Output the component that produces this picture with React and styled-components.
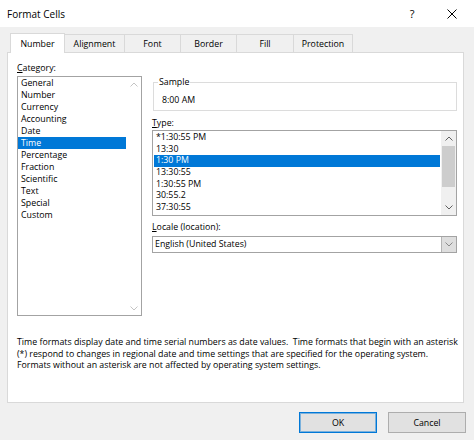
import React from "react";
import styled, { createGlobalStyle } from "styled-components";

const GlobalStyle = createGlobalStyle`
  html, body { margin: 0; padding: 0; background: #f0f0f0; }
  body {
    font-family: "Segoe UI", "Open Sans", "Noto Sans", sans-serif;
    font-size: 8.8px;
    color: #000;
  }
  * { box-sizing: border-box; }
`;

const Window = styled.div`
  width: 474px;
  height: 440px;
  background: #f0f0f0;
  display: flex;
  flex-direction: column;
  overflow: hidden;
`;

const TitleBar = styled.div`
  height: 27px;
  flex-shrink: 0;
  background: #fff;
  display: flex;
  align-items: center;
  padding: 0 2px 0 7px;
`;

const Title = styled.div`
  flex: 1;
  font-size: 10px;
  line-height: 14px;
`;

const TitleButton = styled.div`
  width: 40px;
  height: 27px;
  display: flex;
  align-items: center;
  justify-content: center;
  font-size: 11px;
`;

const Body = styled.div`
  padding: 6px 10px 0 7px;
  display: flex;
  flex-direction: column;
`;

const TabStrip = styled.div`
  display: flex;
  align-items: flex-end;
  height: 20px;
  padding-left: 3px;
  margin-bottom: -1px;
  position: relative;
  z-index: 1;
`;

const Tab = styled.div`
  width: ${(p) => p.$w}px;
  height: ${(p) => (p.$active ? 20 : 18)}px;
  margin-bottom: ${(p) => (p.$active ? 0 : 1)}px;
  margin-left: ${(p) => (p.$first ? 0 : -1)}px;
  border: 1px solid #d9d9d9;
  border-bottom: none;
  background: ${(p) => (p.$active ? "#fff" : "#f0f0f0")};
  display: flex;
  align-items: center;
  justify-content: center;
  position: relative;
  z-index: ${(p) => (p.$active ? 2 : 1)};
  padding-top: ${(p) => (p.$active ? 1 : 0)}px;
`;

const Panel = styled.div`
  height: 351px;
  background: #fff;
  border: 1px solid #d9d9d9;
  display: flex;
  flex-direction: column;
  padding: 9px 6px 0 9px;
`;

const Columns = styled.div`
  display: flex;
  gap: 10px;
`;

const Column = styled.div`
  width: ${(p) => p.$w}px;
  display: flex;
  flex-direction: column;
`;

const Label = styled.div`
  height: 12px;
  line-height: 12px;
  margin-top: ${(p) => p.$mt || 0}px;
`;

const ListBox = styled.div`
  margin-top: ${(p) => p.$mt}px;
  height: ${(p) => p.$h}px;
  border: 1px solid #a3a3a3;
  background: #fff;
  display: flex;
`;

const Items = styled.div`
  flex: 1;
  padding: ${(p) => p.$pad}px;
  overflow: hidden;
`;

const Item = styled.div`
  height: ${(p) => p.$h}px;
  line-height: ${(p) => p.$h}px;
  padding-left: ${(p) => p.$pl}px;
  white-space: nowrap;
  background: ${(p) => (p.$selected ? "#0078d7" : "transparent")};
  color: ${(p) => (p.$selected ? "#fff" : "#000")};
`;

const ScrollBar = styled.div`
  width: 15px;
  display: flex;
  flex-direction: column;
  background: ${(p) => (p.$track ? "#f0f0f0" : "#fff")};
`;

const ScrollArrow = styled.div`
  height: ${(p) => p.$h}px;
  flex-shrink: 0;
  display: flex;
  align-items: center;
  justify-content: center;
`;

const Thumb = styled.div`
  height: 41px;
  margin: 0 1px;
  background: #cdcdcd;
  flex-shrink: 0;
`;

const Spacer = styled.div`
  flex: 1;
`;

const Group = styled.fieldset`
  margin: 14px 0 0 1px;
  padding: 6px 8px 4px;
  border: 1px solid #dcdcdc;
  min-width: 0;
`;

const Legend = styled.legend`
  padding: 0 1px;
  margin-left: -4px;
  line-height: 12px;
`;

const Value = styled.div`
  line-height: 12px;
`;

const Combo = styled.div`
  margin-top: 3px;
  height: 17px;
  border: 1px solid #a3a3a3;
  background: #fff;
  display: flex;
`;

const ComboText = styled.div`
  flex: 1;
  padding-left: 2px;
  line-height: 15px;
`;

const DropButton = styled.div`
  width: 15px;
  background: #dedede;
  border-left: 1px solid #b4b4b4;
  display: flex;
  align-items: center;
  justify-content: center;
`;

const Description = styled.div`
  margin-top: 21px;
  line-height: 11.5px;
  white-space: nowrap;
`;

const Footer = styled.div`
  display: flex;
  justify-content: flex-end;
  gap: 11px;
  margin: 9px -2px 0 0;
`;

const Button = styled.button`
  width: 78px;
  height: 21px;
  background: #e1e1e1;
  border: 1px solid ${(p) => (p.$primary ? "#0078d7" : "#adadad")};
  box-shadow: ${(p) => (p.$primary ? "inset 0 0 0 1px rgba(0,120,215,0.45)" : "none")};
  font: inherit;
  color: #000;
  padding: 0;
`;

const Chevron = ({ up, color }) => (
  <svg width="8" height="5" viewBox="0 0 8 5">
    <polyline
      points={up ? "0.5,4.5 4,1 7.5,4.5" : "0.5,0.5 4,4 7.5,0.5"}
      fill="none"
      stroke={color}
      strokeWidth="1"
    />
  </svg>
);

const tabs = [
  { label: "Number", w: 55 },
  { label: "Alignment", w: 61 },
  { label: "Font", w: 57 },
  { label: "Border", w: 57 },
  { label: "Fill", w: 58 },
  { label: "Protection", w: 60 },
];

const categories = [
  "General",
  "Number",
  "Currency",
  "Accounting",
  "Date",
  "Time",
  "Percentage",
  "Fraction",
  "Scientific",
  "Text",
  "Special",
  "Custom",
];

const types = [
  "*1:30:55 PM",
  "13:30",
  "1:30 PM",
  "13:30:55",
  "1:30:55 PM",
  "30:55.2",
  "37:30:55",
];

export default function App() {
  return (
    <>
      <GlobalStyle />
      <Window>
        <TitleBar>
          <Title>Format Cells</Title>
          <TitleButton>?</TitleButton>
          <TitleButton>
            <svg width="10" height="10" viewBox="0 0 10 10">
              <path d="M0.5 0.5 L9.5 9.5 M9.5 0.5 L0.5 9.5" stroke="#000" strokeWidth="1" />
            </svg>
          </TitleButton>
        </TitleBar>
        <Body>
          <TabStrip>
            {tabs.map((t, i) => (
              <Tab key={t.label} $w={t.w} $first={i === 0} $active={i === 0}>
                {t.label}
              </Tab>
            ))}
          </TabStrip>
          <Panel>
            <Columns>
              <Column $w={125}>
                <Label>
                  <u>C</u>ategory:
                </Label>
                <ListBox $mt={2} $h={240}>
                  <Items $pad={0}>
                    {categories.map((c) => (
                      <Item key={c} $h={12} $pl={3} $selected={c === "Time"}>
                        {c}
                      </Item>
                    ))}
                  </Items>
                  <ScrollBar>
                    <ScrollArrow $h={14}>
                      <Chevron up color="#c4c4c4" />
                    </ScrollArrow>
                    <Spacer />
                    <ScrollArrow $h={14}>
                      <Chevron color="#c4c4c4" />
                    </ScrollArrow>
                  </ScrollBar>
                </ListBox>
              </Column>
              <Column $w={305}>
                <Group>
                  <Legend>Sample</Legend>
                  <Value>8:00 AM</Value>
                </Group>
                <Label $mt={6}>
                  <u>T</u>ype:
                </Label>
                <ListBox $mt={1} $h={86}>
                  <Items $pad={1}>
                    {types.map((t) => (
                      <Item key={t} $h={11.7} $pl={2} $selected={t === "1:30 PM"}>
                        {t}
                      </Item>
                    ))}
                  </Items>
                  <ScrollBar $track>
                    <ScrollArrow $h={15}>
                      <Chevron up color="#606060" />
                    </ScrollArrow>
                    <Thumb />
                    <Spacer />
                    <ScrollArrow $h={15}>
                      <Chevron color="#606060" />
                    </ScrollArrow>
                  </ScrollBar>
                </ListBox>
                <Label $mt={5}>
                  <u>L</u>ocale (location):
                </Label>
                <Combo>
                  <ComboText>English (United States)</ComboText>
                  <DropButton>
                    <Chevron color="#8a8a8a" />
                  </DropButton>
                </Combo>
              </Column>
            </Columns>
            <Description>
              Time formats display date and time serial numbers as date values.&nbsp; Time formats that begin with an asterisk
              <br />
              (*) respond to changes in regional date and time settings that are specified for the operating system.
              <br />
              Formats without an asterisk are not affected by operating system settings.
            </Description>
          </Panel>
          <Footer>
            <Button $primary>OK</Button>
            <Button>Cancel</Button>
          </Footer>
        </Body>
      </Window>
    </>
  );
}
